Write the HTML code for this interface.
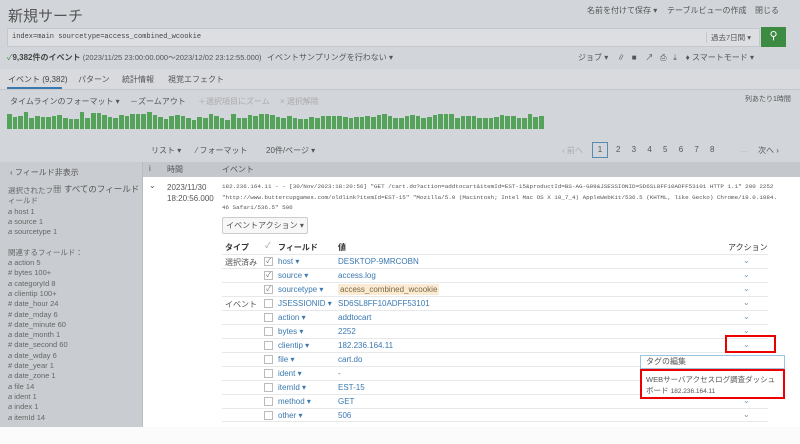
<!DOCTYPE html>
<html><head><meta charset="utf-8"><style>
*{margin:0;padding:0;box-sizing:border-box}
body{width:800px;height:444px;overflow:hidden;background:#d2d5da;font-family:"Liberation Sans","Noto Sans CJK JP",sans-serif;font-size:8px;color:#555;position:relative}
.a{position:absolute;white-space:nowrap}
.mono{font-family:"Liberation Mono",monospace}
.bar{position:absolute;bottom:0;width:4.5px;background:#55a35a}
.row{position:absolute;left:222px;width:546px;height:14px;border-top:1px solid #e6e8ea}
.cb{position:absolute;left:42px;top:2px;width:9px;height:9px;border:1px solid #bbb;background:#fff;font-size:7px;line-height:8px;text-align:center;color:#666}
.fn{position:absolute;left:56px;top:2px;color:#3a78b0}
.fv{position:absolute;left:116px;top:2px;color:#3a78b0}
.ch{position:absolute;left:521px;top:1px;color:#6a96c0;font-size:8px}
.sb{color:#666;line-height:10.3px;font-size:7.5px}
</style></head><body>
<div class="a" style="left:8px;top:5px;font-size:15px;color:#555">新規サーチ</div>
<div class="a" style="left:587px;top:5px;font-size:8px">名前を付けて保存 ▾</div>
<div class="a" style="left:667px;top:5px;font-size:8px">テーブルビューの作成</div>
<div class="a" style="left:755px;top:5px;font-size:8px">閉じる</div>
<div class="a" style="left:7px;top:28px;width:753px;height:19px;background:#dcdee1;border:1px solid #c4c7cb"></div>
<div class="a mono" style="left:12px;top:33px;font-size:7px;color:#444">index=main sourcetype=access_combined_wcookie</div>
<div class="a" style="left:706px;top:32px;font-size:7.5px;border-left:1px solid #c4c7cb;padding-left:4px">過去7日間 ▾</div>
<div class="a" style="left:761px;top:27px;width:25px;height:20px;background:#3d8a43;color:#fff;text-align:center;font-size:11px;line-height:19px">&#9906;</div>
<div class="a" style="left:7px;top:52px;font-size:8px"><span style="color:#3d8a43">✓</span><b style="color:#444">9,382件のイベント</b> <span style="font-size:7.5px">(2023/11/25 23:00:00.000〜2023/12/02 23:12:55.000)</span></div>
<div class="a" style="left:267px;top:52px">イベントサンプリングを行わない ▾</div>
<div class="a" style="left:578px;top:52px">ジョブ ▾ &nbsp;&nbsp; ∥ &nbsp; ■ &nbsp;&nbsp; ↗ &nbsp; ⎙ &nbsp; ⤓ &nbsp;&nbsp; ♦ スマートモード ▾</div>
<div class="a" style="left:0;top:69px;width:800px;height:21px;background:#d8dadd;border-bottom:1px solid #c4c7cb"></div>
<div class="a" style="left:8px;top:74px;color:#444">イベント (9,382)</div>
<div class="a" style="left:7px;top:87px;width:55px;height:2px;background:#3a78b0"></div>
<div class="a" style="left:78px;top:74px">パターン</div>
<div class="a" style="left:122px;top:74px">統計情報</div>
<div class="a" style="left:168px;top:74px">視覚エフェクト</div>
<div class="a" style="left:10px;top:96px">タイムラインのフォーマット ▾</div>
<div class="a" style="left:130px;top:96px">－ズームアウト</div>
<div class="a" style="left:198px;top:96px;color:#aaa">＋選択項目にズーム</div>
<div class="a" style="left:280px;top:96px;color:#aaa">× 選択解除</div>
<div class="a" style="left:745px;top:94px;font-size:7px">列あたり1時間</div>
<div class="a" style="left:7px;top:112px;width:535px;height:17px" id="ch"></div>
<div class="a" style="left:151px;top:145px">リスト ▾</div>
<div class="a" style="left:196px;top:145px">⁄ フォーマット</div>
<div class="a" style="left:266px;top:145px">20件/ページ ▾</div>
<div class="a" style="left:562px;top:145px;color:#aaa">‹ 前へ</div>
<div class="a" style="left:592px;top:142px;width:16px;height:16px;border:1px solid #5a8ab0;text-align:center;line-height:14px">1</div>
<div class="a" style="left:616px;top:145px;word-spacing:9px">2 3 4 5 6 7 8</div>
<div class="a" style="left:740px;top:145px;color:#aaa">…</div>
<div class="a" style="left:758px;top:145px">次へ ›</div>
<div class="a" style="left:0;top:162px;width:800px;height:15px;background:#c4c8cd"></div>
<div class="a" style="left:143px;top:177px;width:657px;height:267px;background:#fff"></div>
<div class="a" style="left:0;top:162px;width:143px;height:265px;background:#c9ccd1;border-right:1px solid #bbb"></div>
<div class="a" style="left:0;top:427px;width:800px;height:17px;background:#fbfbfb"></div>
<div class="a" style="left:10px;top:167px">‹ フィールド非表示</div>
<div class="a" style="left:149px;top:164px">i</div>
<div class="a" style="left:167px;top:164px">時間</div>
<div class="a" style="left:222px;top:164px">イベント</div>
<div class="a sb" style="left:8px;top:186px">選択されたフ<br>ィールド<br><i>a</i> host 1<br><i>a</i> source 1<br><i>a</i> sourcetype 1<br><br>関連するフィールド：<br><i>a</i> action 5<br># bytes 100+<br><i>a</i> categoryId 8<br><i>a</i> clientip 100+<br># date_hour 24<br># date_mday 6<br># date_minute 60<br><i>a</i> date_month 1<br># date_second 60<br><i>a</i> date_wday 6<br># date_year 1<br><i>a</i> date_zone 1<br><i>a</i> file 14<br><i>a</i> ident 1<br><i>a</i> index 1<br><i>a</i> itemId 14</div>
<div class="a" style="left:53px;top:183px;font-size:8.5px">▦ すべてのフィールド</div>
<div class="a" style="left:149px;top:181px">⌄</div>
<div class="a" style="left:167px;top:182px;line-height:11px">2023/11/30<br>18:20:56.000</div>
<div class="a mono" style="left:222px;top:182px;font-size:5.9px;line-height:10.5px;color:#555">182.236.164.11 - - [30/Nov/2023:18:20:56] "GET /cart.do?action=addtocart&amp;itemId=EST-15&amp;productId=BS-AG-G09&amp;JSESSIONID=SD6SL8FF10ADFF53101 HTTP 1.1" 200 2252<br>"http://www.buttercupgames.com/oldlink?itemId=EST-15" "Mozilla/5.0 (Macintosh; Intel Mac OS X 10_7_4) AppleWebKit/536.5 (KHTML, like Gecko) Chrome/19.0.1084.<br>46 Safari/536.5" 506</div>
<div class="a" style="left:222px;top:217px;width:86px;height:17px;border:1px solid #ccc;border-radius:2px;background:#f7f7f7;text-align:center;line-height:15px">イベントアクション ▾</div>
<div class="a" style="left:225px;top:242px;color:#333;font-weight:bold">タイプ</div>
<div class="a" style="left:265px;top:240px;color:#999">✓</div>
<div class="a" style="left:278px;top:242px;color:#333;font-weight:bold">フィールド</div>
<div class="a" style="left:338px;top:242px;color:#333;font-weight:bold">値</div>
<div class="a" style="left:728px;top:242px;color:#333">アクション</div>
<div class="row" style="top:254px"><span class="a" style="left:3px;top:2px">選択済み</span><div class="cb">✓</div><span class="fn">host ▾</span><span class="fv">DESKTOP-9MRCOBN</span><span class="ch">⌄</span></div>
<div class="row" style="top:268px"><div class="cb">✓</div><span class="fn">source ▾</span><span class="fv">access.log</span><span class="ch">⌄</span></div>
<div class="row" style="top:282px"><div class="cb">✓</div><span class="fn">sourcetype ▾</span><span class="fv" style="background:#fbebd5;color:#7a6a40;top:1px;padding:1px 2px">access_combined_wcookie</span><span class="ch">⌄</span></div>
<div class="row" style="top:296px"><span class="a" style="left:3px;top:2px">イベント</span><div class="cb"></div><span class="fn">JSESSIONID ▾</span><span class="fv">SD6SL8FF10ADFF53101</span><span class="ch">⌄</span></div>
<div class="row" style="top:310px"><div class="cb"></div><span class="fn">action ▾</span><span class="fv">addtocart</span><span class="ch">⌄</span></div>
<div class="row" style="top:324px"><div class="cb"></div><span class="fn">bytes ▾</span><span class="fv">2252</span><span class="ch">⌄</span></div>
<div class="row" style="top:338px"><div class="cb"></div><span class="fn">clientip ▾</span><span class="fv">182.236.164.11</span><span class="ch">⌄</span></div>
<div class="row" style="top:352px"><div class="cb"></div><span class="fn">file ▾</span><span class="fv">cart.do</span></div>
<div class="row" style="top:366px"><div class="cb"></div><span class="fn">ident ▾</span><span class="fv">-</span></div>
<div class="row" style="top:380px"><div class="cb"></div><span class="fn">itemId ▾</span><span class="fv">EST-15</span></div>
<div class="row" style="top:394px"><div class="cb"></div><span class="fn">method ▾</span><span class="fv">GET</span><span class="ch">⌄</span></div>
<div class="row" style="top:408px;border-bottom:1px solid #e6e8ea"><div class="cb"></div><span class="fn">other ▾</span><span class="fv">506</span><span class="ch">⌄</span></div>
<div class="a" style="left:725px;top:335px;width:51px;height:18px;border:2px solid #e00"></div>
<div class="a" style="left:640px;top:355px;width:145px;height:14px;border:1px solid #9cc3e0;background:#fff;padding-left:5px;line-height:12px">タグの編集</div>
<div class="a" style="left:640px;top:369px;width:145px;height:30px;border:2px solid #e00;background:#fff;padding:3px 4px;line-height:11px;white-space:normal;font-size:7.5px">WEBサーバアクセスログ調査ダッシュボード <span style="font-size:6.5px">182.236.164.11</span></div>
<script>
var h=[12,9,10,14,8,10,9,9,10,11,8,7,7,14,8,13,13,11,9,8,11,10,12,12,12,14,11,9,7,10,11,10,8,6,9,8,12,10,8,6,12,8,8,11,10,12,12,11,9,8,10,8,7,7,9,8,10,10,10,10,9,8,9,9,10,9,11,12,10,8,8,10,11,10,8,9,11,12,12,12,8,10,10,10,8,8,8,9,11,10,10,8,8,12,9,10];
var c=document.getElementById('ch'),s='';h.forEach(function(v,i){s+='<div class="bar" style="left:'+(i*5.6)+'px;height:'+(v+3)+'px"></div>'});c.innerHTML=s;
</script>
</body></html>
